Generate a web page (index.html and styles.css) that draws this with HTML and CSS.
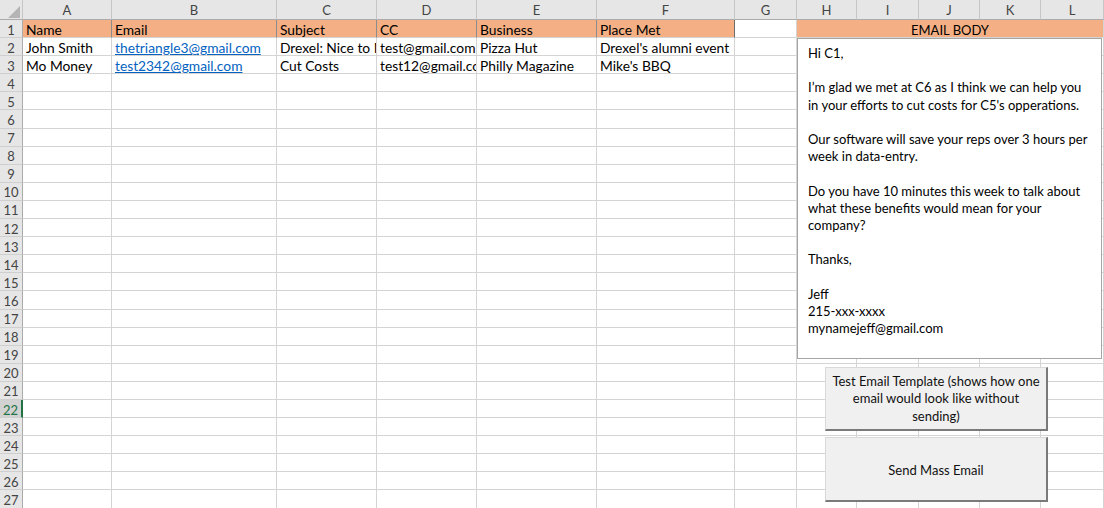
FILE: index.html
```html
<!DOCTYPE html>
<html>
<head>
<meta charset="utf-8">
<link rel="stylesheet" href="styles.css">
</head>
<body>
<div class="wrap">
  <div class="sheet">
    <div class="corner"><svg width="23" height="20" viewBox="0 0 23 20"><polygon points="8,18 20,18 20,6" fill="#b4b4b4"/></svg></div>
    <div class="ch">A</div><div class="ch">B</div><div class="ch">C</div><div class="ch">D</div><div class="ch">E</div><div class="ch">F</div><div class="ch">G</div><div class="ch">H</div><div class="ch">I</div><div class="ch">J</div><div class="ch">K</div><div class="ch">L</div>

    <div class="rh">1</div>
    <div class="c hd">Name</div><div class="c hd">Email</div><div class="c hd">Subject</div><div class="c hd">CC</div><div class="c hd">Business</div><div class="c hd last">Place Met</div><div class="c"></div>
    <div class="c merged">EMAIL BODY</div>

    <div class="rh">2</div>
    <div class="c">John Smith</div><div class="c"><span class="link">thetriangle3@gmail.com</span></div><div class="c">Drexel: Nice to Meet You</div><div class="c">test@gmail.com</div><div class="c">Pizza Hut</div><div class="c">Drexel's alumni event</div><div class="c"></div><div class="c"></div><div class="c"></div><div class="c"></div><div class="c"></div><div class="c"></div>

    <div class="rh">3</div>
    <div class="c">Mo Money</div><div class="c"><span class="link">test2342@gmail.com</span></div><div class="c">Cut Costs</div><div class="c">test12@gmail.com</div><div class="c">Philly Magazine</div><div class="c">Mike's BBQ</div><div class="c"></div><div class="c"></div><div class="c"></div><div class="c"></div><div class="c"></div><div class="c"></div>

    <div class="rh">4</div><div class="c"></div><div class="c"></div><div class="c"></div><div class="c"></div><div class="c"></div><div class="c"></div><div class="c"></div><div class="c"></div><div class="c"></div><div class="c"></div><div class="c"></div><div class="c"></div>
    <div class="rh">5</div><div class="c"></div><div class="c"></div><div class="c"></div><div class="c"></div><div class="c"></div><div class="c"></div><div class="c"></div><div class="c"></div><div class="c"></div><div class="c"></div><div class="c"></div><div class="c"></div>
    <div class="rh">6</div><div class="c"></div><div class="c"></div><div class="c"></div><div class="c"></div><div class="c"></div><div class="c"></div><div class="c"></div><div class="c"></div><div class="c"></div><div class="c"></div><div class="c"></div><div class="c"></div>
    <div class="rh">7</div><div class="c"></div><div class="c"></div><div class="c"></div><div class="c"></div><div class="c"></div><div class="c"></div><div class="c"></div><div class="c"></div><div class="c"></div><div class="c"></div><div class="c"></div><div class="c"></div>
    <div class="rh">8</div><div class="c"></div><div class="c"></div><div class="c"></div><div class="c"></div><div class="c"></div><div class="c"></div><div class="c"></div><div class="c"></div><div class="c"></div><div class="c"></div><div class="c"></div><div class="c"></div>
    <div class="rh">9</div><div class="c"></div><div class="c"></div><div class="c"></div><div class="c"></div><div class="c"></div><div class="c"></div><div class="c"></div><div class="c"></div><div class="c"></div><div class="c"></div><div class="c"></div><div class="c"></div>
    <div class="rh">10</div><div class="c"></div><div class="c"></div><div class="c"></div><div class="c"></div><div class="c"></div><div class="c"></div><div class="c"></div><div class="c"></div><div class="c"></div><div class="c"></div><div class="c"></div><div class="c"></div>
    <div class="rh">11</div><div class="c"></div><div class="c"></div><div class="c"></div><div class="c"></div><div class="c"></div><div class="c"></div><div class="c"></div><div class="c"></div><div class="c"></div><div class="c"></div><div class="c"></div><div class="c"></div>
    <div class="rh">12</div><div class="c"></div><div class="c"></div><div class="c"></div><div class="c"></div><div class="c"></div><div class="c"></div><div class="c"></div><div class="c"></div><div class="c"></div><div class="c"></div><div class="c"></div><div class="c"></div>
    <div class="rh">13</div><div class="c"></div><div class="c"></div><div class="c"></div><div class="c"></div><div class="c"></div><div class="c"></div><div class="c"></div><div class="c"></div><div class="c"></div><div class="c"></div><div class="c"></div><div class="c"></div>
    <div class="rh">14</div><div class="c"></div><div class="c"></div><div class="c"></div><div class="c"></div><div class="c"></div><div class="c"></div><div class="c"></div><div class="c"></div><div class="c"></div><div class="c"></div><div class="c"></div><div class="c"></div>
    <div class="rh">15</div><div class="c"></div><div class="c"></div><div class="c"></div><div class="c"></div><div class="c"></div><div class="c"></div><div class="c"></div><div class="c"></div><div class="c"></div><div class="c"></div><div class="c"></div><div class="c"></div>
    <div class="rh">16</div><div class="c"></div><div class="c"></div><div class="c"></div><div class="c"></div><div class="c"></div><div class="c"></div><div class="c"></div><div class="c"></div><div class="c"></div><div class="c"></div><div class="c"></div><div class="c"></div>
    <div class="rh">17</div><div class="c"></div><div class="c"></div><div class="c"></div><div class="c"></div><div class="c"></div><div class="c"></div><div class="c"></div><div class="c"></div><div class="c"></div><div class="c"></div><div class="c"></div><div class="c"></div>
    <div class="rh">18</div><div class="c"></div><div class="c"></div><div class="c"></div><div class="c"></div><div class="c"></div><div class="c"></div><div class="c"></div><div class="c"></div><div class="c"></div><div class="c"></div><div class="c"></div><div class="c"></div>
    <div class="rh">19</div><div class="c"></div><div class="c"></div><div class="c"></div><div class="c"></div><div class="c"></div><div class="c"></div><div class="c"></div><div class="c"></div><div class="c"></div><div class="c"></div><div class="c"></div><div class="c"></div>
    <div class="rh">20</div><div class="c"></div><div class="c"></div><div class="c"></div><div class="c"></div><div class="c"></div><div class="c"></div><div class="c"></div><div class="c"></div><div class="c"></div><div class="c"></div><div class="c"></div><div class="c"></div>
    <div class="rh">21</div><div class="c"></div><div class="c"></div><div class="c"></div><div class="c"></div><div class="c"></div><div class="c"></div><div class="c"></div><div class="c"></div><div class="c"></div><div class="c"></div><div class="c"></div><div class="c"></div>
    <div class="rh sel">22</div><div class="c"></div><div class="c"></div><div class="c"></div><div class="c"></div><div class="c"></div><div class="c"></div><div class="c"></div><div class="c"></div><div class="c"></div><div class="c"></div><div class="c"></div><div class="c"></div>
    <div class="rh">23</div><div class="c"></div><div class="c"></div><div class="c"></div><div class="c"></div><div class="c"></div><div class="c"></div><div class="c"></div><div class="c"></div><div class="c"></div><div class="c"></div><div class="c"></div><div class="c"></div>
    <div class="rh">24</div><div class="c"></div><div class="c"></div><div class="c"></div><div class="c"></div><div class="c"></div><div class="c"></div><div class="c"></div><div class="c"></div><div class="c"></div><div class="c"></div><div class="c"></div><div class="c"></div>
    <div class="rh">25</div><div class="c"></div><div class="c"></div><div class="c"></div><div class="c"></div><div class="c"></div><div class="c"></div><div class="c"></div><div class="c"></div><div class="c"></div><div class="c"></div><div class="c"></div><div class="c"></div>
    <div class="rh">26</div><div class="c"></div><div class="c"></div><div class="c"></div><div class="c"></div><div class="c"></div><div class="c"></div><div class="c"></div><div class="c"></div><div class="c"></div><div class="c"></div><div class="c"></div><div class="c"></div>
    <div class="rh">27</div><div class="c"></div><div class="c"></div><div class="c"></div><div class="c"></div><div class="c"></div><div class="c"></div><div class="c"></div><div class="c"></div><div class="c"></div><div class="c"></div><div class="c"></div><div class="c"></div>
  </div>

  <div class="textbox">
    <div class="ln">Hi C1,</div>
    <div class="ln">&nbsp;</div>
    <div class="ln">I’m glad we met at C6 as I think we can help you</div>
    <div class="ln">in your efforts to cut costs for C5's opperations.</div>
    <div class="ln">&nbsp;</div>
    <div class="ln">Our software will save your reps over 3 hours per</div>
    <div class="ln">week in data-entry.</div>
    <div class="ln">&nbsp;</div>
    <div class="ln">Do you have 10 minutes this week to talk about</div>
    <div class="ln">what these benefits would mean for your</div>
    <div class="ln">company?</div>
    <div class="ln">&nbsp;</div>
    <div class="ln">Thanks,</div>
    <div class="ln">&nbsp;</div>
    <div class="ln">Jeff</div>
    <div class="ln">215-xxx-xxxx</div>
    <div class="ln">mynamejeff@gmail.com</div>
  </div>

  <div class="btn btn-test"><span>Test Email Template (shows how one<br>email would look like without<br>sending)</span></div>
  <div class="btn btn-send"><span>Send Mass Email</span></div>
</div>
</body>
</html>
```

FILE: styles.css
```css
* { box-sizing: border-box; }
html, body { margin: 0; padding: 0; background: #ffffff; }
body {
  font-family: Lato, "Open Sans", sans-serif;
  font-size: 13.8px;
  color: #000;
}
.wrap {
  position: relative;
  width: 1104px;
  height: 508px;
  overflow: hidden;
}
.sheet {
  display: grid;
  grid-template-columns: 23px 89px 165px 100px 100px 120px 138px 62px 60px 62px 61px 61px 63px;
  grid-template-rows: 20px repeat(27, 18.1px);
  width: 1104px;
}
.corner {
  background: #e6e6e6;
  border-right: 1px solid #c6c6c6;
  border-bottom: 1px solid #ababab;
  line-height: 0;
}
.ch {
  background: #e6e6e6;
  border-right: 1px solid #c6c6c6;
  border-bottom: 1px solid #ababab;
  color: #444;
  font-size: 13px;
  display: flex;
  align-items: center;
  justify-content: center;
}
.rh {
  background: #e6e6e6;
  border-right: 1px solid #ababab;
  border-bottom: 1px solid #cfcfcf;
  color: #444;
  font-size: 13px;
  padding-top: 2px;
  display: flex;
  align-items: center;
  justify-content: center;
}
.rh.sel {
  background: #d2d2d2;
  color: #217346;
  border-right: 2px solid #217346;
}
.c {
  border-right: 1px solid #d4d4d4;
  border-bottom: 1px solid #d4d4d4;
  padding: 2px 0 0 3px;
  white-space: nowrap;
  overflow: hidden;
  display: flex;
  align-items: center;
}
.hd {
  background: #f4b084;
  border-right: 1px solid #8c8c8c;
}
.hd.last { border-right: 1px solid #6e6e6e; }
.merged {
  grid-column: span 5;
  background: #f4b084;
  justify-content: center;
  padding: 2px 0 0 0;
  font-size: 13px;
}
.link {
  color: #0563c1;
  text-decoration: underline;
  line-height: 15px;
}
.textbox {
  position: absolute;
  left: 797px;
  top: 38px;
  width: 305px;
  height: 321px;
  background: #fff;
  border: 1px solid #a6a6a6;
  padding: 6px 0 0 10px;
  font-size: 13px;
}
.ln {
  line-height: 17.2px;
  white-space: nowrap;
}
.btn {
  position: absolute;
  left: 825px;
  width: 223px;
  background: #f0f0f0;
  border-top: 1px solid #d9d9d9;
  border-left: 1px solid #d9d9d9;
  border-right: 2px solid #7a7a7a;
  border-bottom: 2px solid #7a7a7a;
  display: flex;
  align-items: center;
  justify-content: center;
  text-align: center;
  line-height: 17.5px;
  font-size: 13px;
  white-space: nowrap;
  color: #111;
}
.btn-test { top: 367px; height: 64px; padding-top: 1px; }
.btn-send { top: 437px; height: 65px; padding-top: 3px; }
```
